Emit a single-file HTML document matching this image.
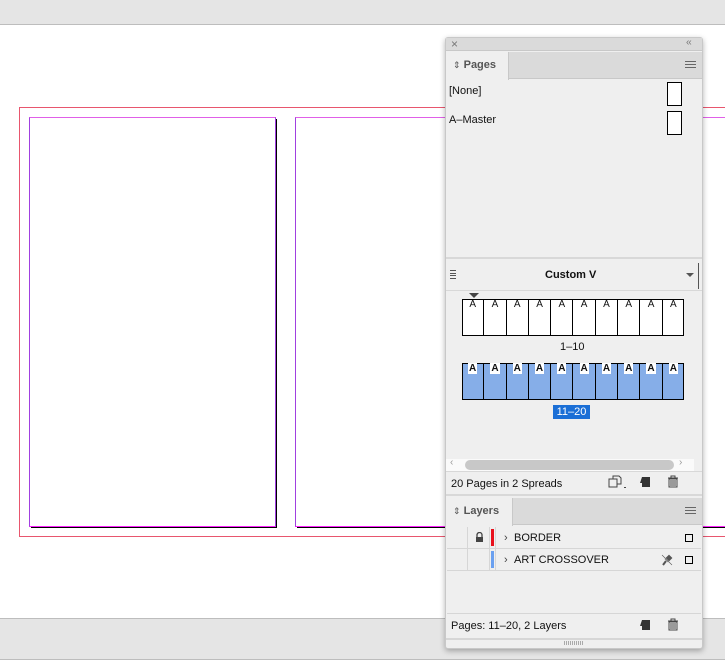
<!DOCTYPE html>
<html><head><style>
*{margin:0;padding:0;box-sizing:border-box}
body{width:725px;height:666px;position:relative;background:#fff;font-family:"Liberation Sans",sans-serif;overflow:hidden;font-size:11px;color:#111}
.a{position:absolute}
.pg{position:absolute;border:1px solid #a040e0;border-top-color:#e060e8;border-bottom:1px solid #ff20ff}
</style></head><body>
<div class="a" style="left:0;top:0;width:725px;height:25px;background:#e5e5e5;border-bottom:1px solid #bdbdbd"></div>
<div class="a" style="left:0;top:618px;width:725px;height:42px;background:#e5e5e5;border-top:1px solid #bdbdbd;border-bottom:1px solid #bdbdbd"></div>
<div class="a" style="left:19px;top:107px;width:720px;height:430px;border:1px solid #e8566e"></div>
<div class="a" style="left:31px;top:119px;width:246px;height:409px;background:#000"></div>
<div class="pg" style="left:29px;top:117px;width:247px;height:410px;background:#fff"></div>
<div class="a" style="left:297px;top:119px;width:440px;height:409px;background:#000"></div>
<div class="pg" style="left:295px;top:117px;width:440px;height:410px;background:#fff"></div>

<div class="a" style="left:445px;top:37px;width:258px;height:612px;background:#efefef;border:1px solid #c8c8c8;border-radius:3px;box-shadow:0 2px 6px rgba(0,0,0,.3)">
 <div class="a" style="left:0;top:0;width:256px;height:13px;background:#dadada;border-bottom:1px solid #c8c8c8"></div>
 <div class="a" style="left:5px;top:-1px;font-size:12px;color:#777">×</div>
 <div class="a" style="left:240px;top:-1px;font-size:10px;color:#777;letter-spacing:-1px">‹‹</div>
 <div class="a" style="left:0;top:14px;width:256px;height:27px;background:#dadada;border-bottom:1px solid #c8c8c8"></div>
 <div class="a" style="left:0;top:14px;width:63px;height:28px;background:#efefef;border-right:1px solid #c8c8c8"></div>
 <div class="a" style="left:7px;top:21px;font-size:11px;font-weight:bold;color:#555"><span style="font-size:9px;font-weight:normal">⇕</span> Pages</div>
 <div class="a" style="left:239px;top:23px;width:11px;height:7px;border-top:1px solid #666;border-bottom:1px solid #666"><div style="margin-top:2px;border-top:1px solid #666"></div></div>
 <div class="a" style="left:3px;top:47px;font-size:11px">[None]</div>
 <div class="a" style="left:221px;top:44px;width:15px;height:24px;border:1px solid #000;background:#fff"></div>
 <div class="a" style="left:3px;top:76px;font-size:11px">A–Master</div>
 <div class="a" style="left:221px;top:73px;width:15px;height:24px;border:1px solid #000;background:#fff"></div>
 <div class="a" style="left:0;top:219px;width:256px;height:2px;background:#d8d8d8"></div>
 <div class="a" style="left:4px;top:232px;width:6px;height:9px;border-top:1px solid #555;border-bottom:1px solid #555"><div style="margin-top:2px;border-top:1px solid #555;height:3px;border-bottom:1px solid #555"></div></div>
 <div class="a" style="left:99px;top:231px;font-weight:bold;font-size:11px">Custom V</div>
 <div class="a" style="left:240px;top:235px;width:0;height:0;border-left:4px solid transparent;border-right:4px solid transparent;border-top:4px solid #555"></div>
 <div class="a" style="left:252px;top:225px;width:1px;height:26px;background:#555"></div>
 <div class="a" style="left:0;top:252px;width:256px;height:1px;background:#d8d8d8"></div>
 <div class="a" style="left:23px;top:255px;width:0;height:0;border-left:5px solid transparent;border-right:5px solid transparent;border-top:5px solid #444"></div>
 <div class="a" style="left:16px;top:261px;width:222px;height:37px;border:1px solid #000;background:#fff"></div>
 <div class="a" style="left:16px;top:325px;width:222px;height:37px;border:1px solid #000;background:#86aee8"></div>
 <div class="a" style="left:16px;top:261px;width:222px;height:37px;display:flex;font-size:10px">
  <div style="flex:1;border-right:1px solid #000;text-align:center;line-height:12px">A</div><div style="flex:1;border-right:1px solid #000;text-align:center;line-height:12px">A</div><div style="flex:1;border-right:1px solid #000;text-align:center;line-height:12px">A</div><div style="flex:1;border-right:1px solid #000;text-align:center;line-height:12px">A</div><div style="flex:1;border-right:1px solid #000;text-align:center;line-height:12px">A</div><div style="flex:1;border-right:1px solid #000;text-align:center;line-height:12px">A</div><div style="flex:1;border-right:1px solid #000;text-align:center;line-height:12px">A</div><div style="flex:1;border-right:1px solid #000;text-align:center;line-height:12px">A</div><div style="flex:1;border-right:1px solid #000;text-align:center;line-height:12px">A</div><div style="flex:1;text-align:center;line-height:12px">A</div>
 </div>
 <div class="a" style="left:16px;top:325px;width:222px;height:37px;display:flex;font-size:10px">
  <div style="flex:1;border-right:1px solid #000;text-align:center;line-height:11px"><span style="background:#fff;font-weight:bold;padding:0 1px">A</span></div><div style="flex:1;border-right:1px solid #000;text-align:center;line-height:11px"><span style="background:#fff;font-weight:bold;padding:0 1px">A</span></div><div style="flex:1;border-right:1px solid #000;text-align:center;line-height:11px"><span style="background:#fff;font-weight:bold;padding:0 1px">A</span></div><div style="flex:1;border-right:1px solid #000;text-align:center;line-height:11px"><span style="background:#fff;font-weight:bold;padding:0 1px">A</span></div><div style="flex:1;border-right:1px solid #000;text-align:center;line-height:11px"><span style="background:#fff;font-weight:bold;padding:0 1px">A</span></div><div style="flex:1;border-right:1px solid #000;text-align:center;line-height:11px"><span style="background:#fff;font-weight:bold;padding:0 1px">A</span></div><div style="flex:1;border-right:1px solid #000;text-align:center;line-height:11px"><span style="background:#fff;font-weight:bold;padding:0 1px">A</span></div><div style="flex:1;border-right:1px solid #000;text-align:center;line-height:11px"><span style="background:#fff;font-weight:bold;padding:0 1px">A</span></div><div style="flex:1;border-right:1px solid #000;text-align:center;line-height:11px"><span style="background:#fff;font-weight:bold;padding:0 1px">A</span></div><div style="flex:1;text-align:center;line-height:11px"><span style="background:#fff;font-weight:bold;padding:0 1px">A</span></div>
 </div>
 <div class="a" style="left:114px;top:303px;font-size:11px">1–10</div>
 <div class="a" style="left:107px;top:367px;width:37px;height:14px;background:#1b6fd6;color:#fff;font-size:11px;text-align:center;line-height:14px">11–20</div>
 <div class="a" style="left:0;top:421px;width:248px;height:12px;background:#fafafa"></div>
 <div class="a" style="left:4px;top:419px;color:#999;font-size:10px">‹</div>
 <div class="a" style="left:233px;top:419px;color:#999;font-size:10px">›</div>
 <div class="a" style="left:19px;top:422px;width:209px;height:10px;background:#c8c8c8;border-radius:5px"></div>
 <div class="a" style="left:0;top:433px;width:256px;height:1px;background:#d8d8d8"></div>
 <div class="a" style="left:5px;top:440px;font-size:11px">20 Pages in 2 Spreads</div>
 <svg class="a" style="left:162px;top:437px" width="20" height="14"><rect x="1" y="4" width="8" height="8" fill="none" stroke="#444"/><path d="M5 4V1h6l2 2v6H9" fill="none" stroke="#444"/><rect x="16" y="12" width="2" height="1" fill="#444"/></svg>
 <svg class="a" style="left:193px;top:438px" width="12" height="12"><path d="M3 1h8v10H3V7H1z" fill="#333"/></svg>
 <svg class="a" style="left:221px;top:437px" width="12" height="13"><path d="M1 3h10M4 3V1h4v2M2 4h8v8H2z" fill="none" stroke="#444"/><path d="M4 5v6M6 5v6M8 5v6" stroke="#444"/></svg>
 <div class="a" style="left:0;top:456px;width:256px;height:2px;background:#d8d8d8"></div>
 <div class="a" style="left:0;top:460px;width:256px;height:27px;background:#dadada;border-bottom:1px solid #c8c8c8"></div>
 <div class="a" style="left:0;top:460px;width:67px;height:28px;background:#efefef;border-right:1px solid #c8c8c8"></div>
 <div class="a" style="left:7px;top:467px;font-size:11px;font-weight:bold;color:#555"><span style="font-size:9px;font-weight:normal">⇕</span> Layers</div>
 <div class="a" style="left:239px;top:469px;width:11px;height:7px;border-top:1px solid #666;border-bottom:1px solid #666"><div style="margin-top:2px;border-top:1px solid #666"></div></div>
 <div class="a" style="left:1px;top:489px;width:254px;height:22px;border-bottom:1px solid #d6d6d6"></div>
 <div class="a" style="left:1px;top:511px;width:254px;height:22px;border-bottom:1px solid #d6d6d6"></div>
 <div class="a" style="left:21px;top:489px;width:1px;height:44px;background:#d6d6d6"></div>
 <div class="a" style="left:43px;top:489px;width:1px;height:44px;background:#d6d6d6"></div>
 <div class="a" style="left:49px;top:489px;width:1px;height:44px;background:#d6d6d6"></div>
 <div class="a" style="left:45px;top:491px;width:3px;height:17px;background:#e8101c"></div>
 <div class="a" style="left:45px;top:513px;width:3px;height:17px;background:#6aa0f0"></div>
 <svg class="a" style="left:29px;top:494px" width="9" height="10"><path d="M2 5V3a2.5 2.5 0 015 0v2" fill="none" stroke="#444" stroke-width="1.3"/><rect x="1" y="5" width="7" height="5" fill="#444"/></svg>
 <div class="a" style="left:58px;top:494px;font-size:11px;color:#444">›</div>
 <div class="a" style="left:68px;top:494px;font-size:11px">BORDER</div>
 <div class="a" style="left:58px;top:516px;font-size:11px;color:#444">›</div>
 <div class="a" style="left:68px;top:516px;font-size:11px">ART CROSSOVER</div>
 <div class="a" style="left:239px;top:496px;width:8px;height:8px;border:1px solid #000"></div>
 <div class="a" style="left:239px;top:518px;width:8px;height:8px;border:1px solid #000"></div>
 <svg class="a" style="left:215px;top:516px" width="12" height="12"><path d="M2 11L5 7M5 5l3-3 2 2-3 3z" stroke="#555" stroke-width="2" fill="#555"/><path d="M1 1l10 10" stroke="#fff" stroke-width="1"/><path d="M1 1l10 10" stroke="#555" stroke-width=".6"/></svg>
 <div class="a" style="left:1px;top:575px;width:254px;height:1px;background:#d6d6d6"></div>
 <div class="a" style="left:5px;top:582px;font-size:11px">Pages: 11–20, 2 Layers</div>
 <svg class="a" style="left:193px;top:581px" width="12" height="12"><path d="M3 1h8v10H3V7H1z" fill="#333"/></svg>
 <svg class="a" style="left:221px;top:580px" width="12" height="13"><path d="M1 3h10M4 3V1h4v2M2 4h8v8H2z" fill="none" stroke="#444"/><path d="M4 5v6M6 5v6M8 5v6" stroke="#444"/></svg>
 <div class="a" style="left:0;top:600px;width:256px;height:2px;background:#d6d6d6"></div>
 <div class="a" style="left:118px;top:603px;width:20px;height:4px;background:repeating-linear-gradient(90deg,#aaa 0 1px,transparent 1px 2px)"></div>
</div>
</body></html>
